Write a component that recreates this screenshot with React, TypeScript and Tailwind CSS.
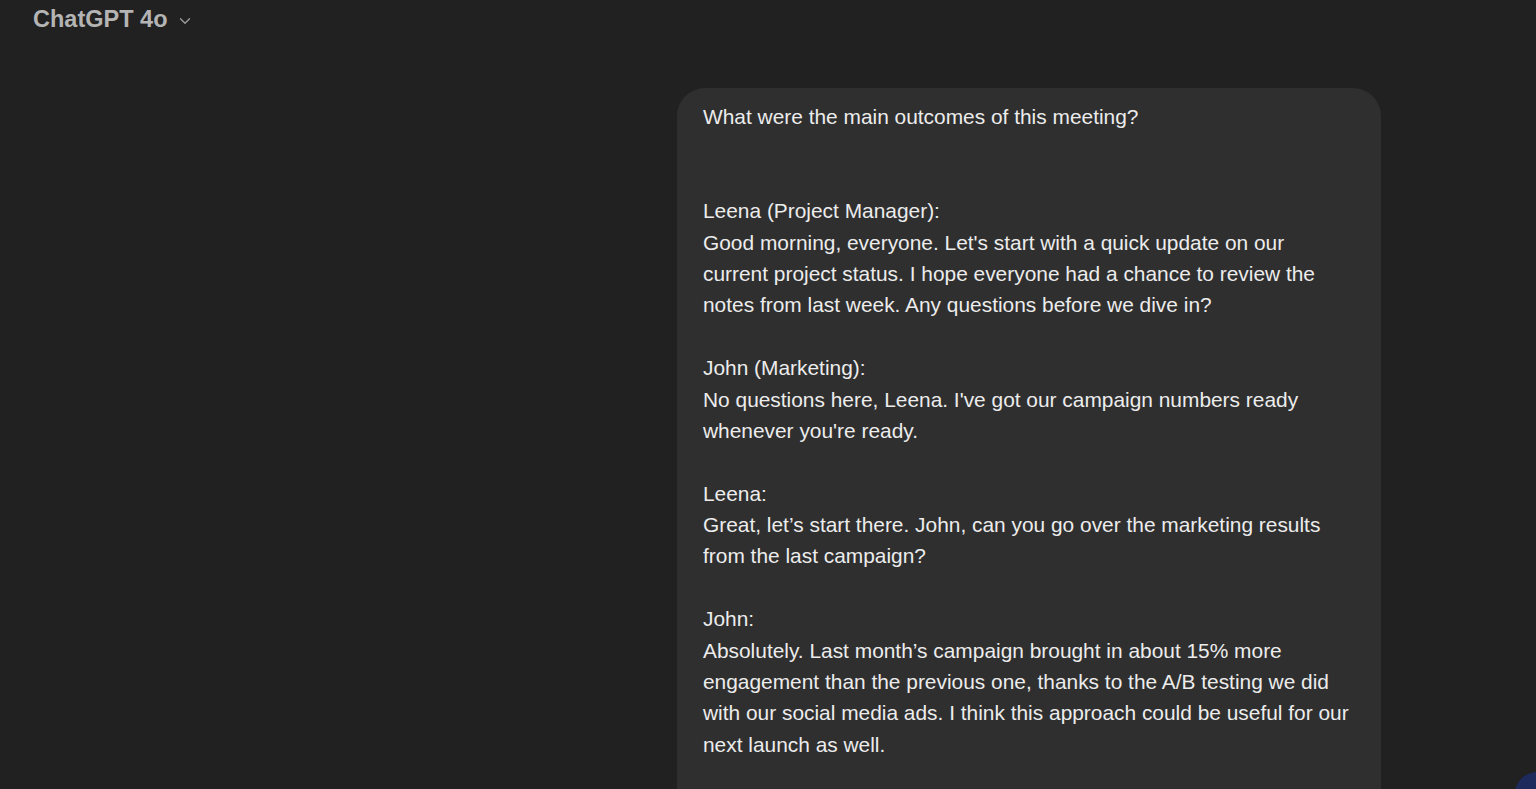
import { ChevronDown } from "lucide-react";

const lines = [
  "What were the main outcomes of this meeting?",
  "",
  "",
  "Leena (Project Manager):",
  "Good morning, everyone. Let's start with a quick update on our",
  "current project status. I hope everyone had a chance to review the",
  "notes from last week. Any questions before we dive in?",
  "",
  "John (Marketing):",
  "No questions here, Leena. I've got our campaign numbers ready",
  "whenever you're ready.",
  "",
  "Leena:",
  "Great, let\u2019s start there. John, can you go over the marketing results",
  "from the last campaign?",
  "",
  "John:",
  "Absolutely. Last month\u2019s campaign brought in about 15% more",
  "engagement than the previous one, thanks to the A/B testing we did",
  "with our social media ads. I think this approach could be useful for our",
  "next launch as well.",
];

export default function App() {
  return (
    <div
      className="relative h-[789px] w-full overflow-hidden bg-[#212121] text-[#ececec]"
      style={{ fontFamily: '"Liberation Sans", Arial, sans-serif' }}
    >
      {/* top bar */}
      <div className="flex h-[40px] items-center pl-[33px]">
        <button className="flex items-center gap-[9px] text-[23.5px] font-bold text-[#b4b4b4]">
          ChatGPT 4o
          <ChevronDown size={18} strokeWidth={1.8} className="mt-[1px] text-[#9b9b9b]" />
        </button>
      </div>

      {/* message */}
      <div className="flex justify-end pr-[155px] pt-[48px]">
        <div className="w-[704px] rounded-[28px] bg-[#2f2f2f] pl-[26px] pr-[20px] pt-[13px] pb-[120px]">
          {lines.map((line, i) => (
            <div key={i} className="h-[31.4px] whitespace-pre text-[20.9px] leading-[31.4px]">
              {line}
            </div>
          ))}
        </div>
      </div>

      {/* corner button peeking in */}
      <div className="absolute left-[1515px] top-[772px] h-[44px] w-[44px] rounded-full bg-[#1f2a5c]" />
    </div>
  );
}
